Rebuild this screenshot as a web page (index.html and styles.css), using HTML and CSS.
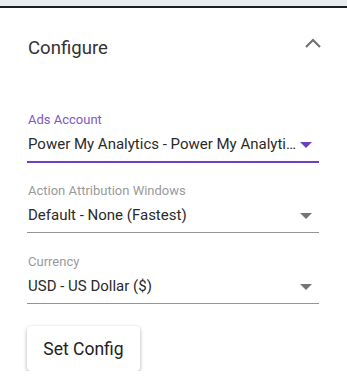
FILE: index.html
```html
<!DOCTYPE html>
<html>
<head>
<meta charset="utf-8">
<link rel="stylesheet" href="styles.css">
</head>
<body>
<div class="topbar"></div>
<section class="panel">
  <header class="panel-head">
    <h2 class="panel-title">Configure</h2>
    <svg class="chevron" width="16" height="10" viewBox="0 0 16 10"><polyline points="1,9 8,2 15,9" fill="none" stroke="#737373" stroke-width="2.2"/></svg>
  </header>
  <div class="field field-focused">
    <div class="field-label">Ads Account</div>
    <div class="select">
      <span class="select-value">Power My Analytics - Power My Analytics Ads Account (1234567890)</span>
      <span class="select-arrow"></span>
    </div>
  </div>
  <div class="field">
    <div class="field-label">Action Attribution Windows</div>
    <div class="select">
      <span class="select-value">Default - None (Fastest)</span>
      <span class="select-arrow"></span>
    </div>
  </div>
  <div class="field">
    <div class="field-label">Currency</div>
    <div class="select">
      <span class="select-value">USD - US Dollar ($)</span>
      <span class="select-arrow"></span>
    </div>
  </div>
  <button class="btn">Set Config</button>
</section>
</body>
</html>
```
FILE: styles.css
```css
html, body {
  margin: 0;
  padding: 0;
  background: #ffffff;
  font-family: Roboto, "Liberation Sans", sans-serif;
}
.topbar {
  height: 6px;
  background: #e9ecef;
  border-bottom: 2px solid #1e1e1e;
}
.panel {
  padding: 28px 28px 0 27px;
}
.panel-head {
  display: flex;
  justify-content: space-between;
  align-items: flex-start;
  margin-right: -2px;
  margin-bottom: 52px;
}
.panel-title {
  margin: 0 0 0 1px;
  font-size: 18.6px;
  line-height: 24px;
  font-weight: 400;
  color: #333333;
}
.chevron {
  display: block;
  margin-top: 2px;
}
.field {
  border-bottom: 1px solid #949494;
  margin-bottom: 21px;
}
.field-focused {
  border-bottom: 2px solid #6a3fc0;
  margin-bottom: 20px;
}
.field-label {
  font-size: 13px;
  line-height: 16px;
  color: #9a9a9a;
  margin: 0 0 6px 1px;
}
.field-focused .field-label {
  color: #7e57c2;
}
.select {
  display: flex;
  align-items: center;
  height: 20px;
  padding-bottom: 7px;
  padding-left: 1px;
}
.select-value {
  flex: 1;
  min-width: 0;
  white-space: nowrap;
  overflow: hidden;
  text-overflow: ellipsis;
  font-size: 15px;
  line-height: 20px;
  color: #2a2a2a;
}
.select-arrow {
  width: 0;
  height: 0;
  border-left: 6px solid transparent;
  border-right: 6px solid transparent;
  border-top: 6px solid #757575;
  margin: 2px 7px 0 3px;
}
.field-focused .select-arrow {
  border-top-color: #6a3fc0;
}
.btn {
  display: block;
  margin-top: 22px;
  width: 113px;
  height: 45px;
  background: #ffffff;
  border: none;
  border-radius: 4px;
  box-shadow: 0 2px 4px rgba(0,0,0,0.28), 0 0 2px rgba(0,0,0,0.08);
  font-family: Roboto, "Liberation Sans", sans-serif;
  font-size: 17.5px;
  color: #222222;
  padding: 0;
}
```
